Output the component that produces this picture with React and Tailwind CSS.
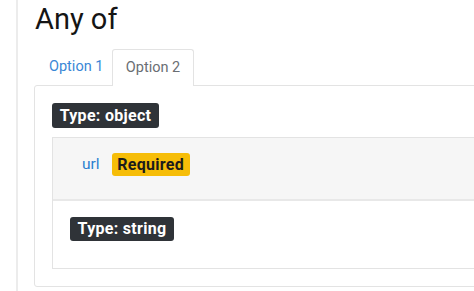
import React from 'react'

const font = { fontFamily: 'Roboto, "Open Sans", sans-serif' }

function Badge({ children, className }) {
    return (
        <span className={`inline-flex items-center justify-center rounded-[3px] text-[16px] font-bold leading-none tracking-[0.3px] ${className}`}>
            {children}
        </span>
    )
}

export default function App() {
    return (
        <div className="w-[474px] h-[291px] overflow-hidden bg-white" style={font}>
            <div className="ml-4 h-full border-l-2 border-[#ececec] pl-[16px]">
                <h1 className="text-[29px] leading-none text-[#151515] pt-[5px] pl-[1px]">Any of</h1>

                {/* tabs */}
                <div className="flex mt-[15px] pl-[15px]">
                    <div className="h-[36px] w-[63px] flex items-center text-[14.5px] text-[#3a87d6]">Option 1</div>
                    <div className="h-[37px] w-[82px] flex items-center justify-center text-[14.5px] text-[#6a6e73] border border-b-0 border-[#e3e3e3] rounded-t-[3px] bg-white relative z-10 -mb-px">Option 2</div>
                </div>

                {/* panel */}
                <div className="w-[460px] border border-[#e3e3e3] rounded-[3px] pt-[17px] pb-[17px] pl-[17px]">
                    <Badge className="bg-[#2f3338] text-white w-[107px] h-[25px]">Type: object</Badge>
                    <div className="mt-[9px] border border-r-0 border-[#e3e3e3]">
                        <div className="h-[63px] bg-[#f6f6f6] border-b-2 border-[#e8e8e8] flex items-start pt-[15px] pl-[29px] gap-[12px]">
                            <span className="h-[23px] flex items-center text-[15.5px] text-[#2b7fd0]">url</span>
                            <Badge className="bg-[#f6bd08] text-[#1b1b1b] w-[78px] h-[23px]">Required</Badge>
                        </div>
                        <div className="h-[67px] pl-[17px] pt-[16px]">
                            <Badge className="bg-[#2f3338] text-white w-[104px] h-[24px]">Type: string</Badge>
                        </div>
                    </div>
                </div>
            </div>
        </div>
    )
}
